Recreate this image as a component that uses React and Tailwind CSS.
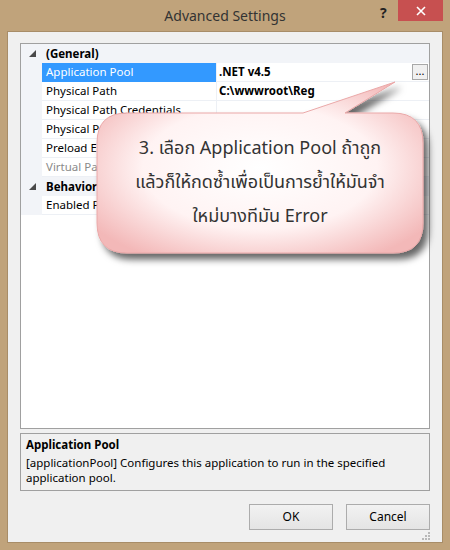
import React from "react";

const ui = { fontFamily: '"Noto Sans", "Open Sans", sans-serif' };

const rows = [
  { type: "cat", name: "(General)" },
  { name: "Application Pool", value: ".NET v4.5", selected: true },
  { name: "Physical Path", value: "C:\\wwwroot\\Reg" },
  { name: "Physical Path Credentials" },
  { name: "Physical Path Logon Type" },
  { name: "Preload Enabled" },
  { name: "Virtual Path", muted: true },
  { type: "cat", name: "Behavior" },
  { name: "Enabled Protocols" },
];

const Expander = () => (
  <svg width="7" height="7" viewBox="0 0 7 7" className="block">
    <path d="M7 0 L7 7 L0 7 Z" fill="#4a4a4a" />
  </svg>
);

const GridRow = ({ row }) => {
  if (row.type === "cat") {
    return (
      <div className="flex h-[19px] items-center bg-[#f2f4f8]">
        <div className="flex w-[21px] shrink-0 justify-center pl-[2px]">
          <Expander />
        </div>
        <span className="pl-[4px] text-[11.5px] font-bold text-black">{row.name}</span>
      </div>
    );
  }
  return (
    <div className="flex h-[19px]">
      <div className="w-[21px] shrink-0 bg-[#f2f4f8]" />
      <div
        className={`flex w-[174px] shrink-0 items-center overflow-hidden whitespace-nowrap border-b pl-[4px] text-[11.5px] ${
          row.selected
            ? "border-[#3399ff] bg-[#3399ff] text-white"
            : "border-[#edf0f5] bg-white " + (row.muted ? "text-[#8a8a8a]" : "text-black")
        }`}
      >
        {row.name}
      </div>
      <div className="flex flex-1 items-center justify-between border-b border-l border-[#edf0f5] bg-white pl-[2px] pr-[1px]">
        <span className="text-[11.5px] font-bold text-black">{row.value}</span>
        {row.selected && (
          <span className="flex h-[16px] w-[16px] items-center justify-center border border-[#a8a8a8] bg-[#f0f0f0] pb-[4px] text-[11px] leading-none text-black">
            ...
          </span>
        )}
      </div>
    </div>
  );
};

const Callout = () => (
  <>
    <svg className="pointer-events-none absolute left-0 top-0" width="450" height="550" viewBox="0 0 450 550">
      <defs>
        <radialGradient id="bubbleFill" cx="50%" cy="50%" r="62%">
          <stop offset="0%" stopColor="#ffffff" />
          <stop offset="58%" stopColor="#fff3f3" />
          <stop offset="100%" stopColor="#f3b8b8" />
        </radialGradient>
        <filter id="bubbleShadow" x="-10%" y="-20%" width="130%" height="150%">
          <feDropShadow dx="5" dy="6" stdDeviation="3.5" floodColor="#000" floodOpacity="0.6" />
        </filter>
      </defs>
      <path
        d="M127 113 L303 113 L395 82 L345 113 L393 113 Q423 113 423 143 L423 223 Q423 253 393 253 L127 253 Q97 253 97 223 L97 143 Q97 113 127 113 Z"
        fill="url(#bubbleFill)"
        stroke="#eaa8a8"
        strokeWidth="1"
        filter="url(#bubbleShadow)"
      />
    </svg>
    <div
      className="absolute left-[97px] top-[113px] flex h-[140px] w-[326px] flex-col items-center pt-[17px] text-[18px] leading-[34px] text-[#333]"
      style={{ fontFamily: '"Noto Sans", "Noto Sans Thai", "Open Sans", sans-serif' }}
    >
      <span>3. เลือก Application Pool ถ้าถูก</span>
      <span>แล้วก็ให้กดซ้ำเพื่อเป็นการย้ำให้มันจำ</span>
      <span>ใหม่บางทีมัน Error</span>
    </div>
  </>
);

export default function App() {
  return (
    <div className="relative flex h-[550px] w-[450px] flex-col bg-[#c0a37b]" style={ui}>
      {/* title bar */}
      <div className="relative flex h-[31px] shrink-0 items-center justify-center">
        <span className="text-[14px] text-[#333]">Advanced Settings</span>
        <span className="absolute left-[380px] top-[2px] text-[14px] font-bold text-[#222]">?</span>
        <div className="absolute left-[398px] top-0 flex h-[21px] w-[45px] items-center justify-center bg-[#c75050]">
          <svg width="10" height="10" viewBox="0 0 10 10">
            <path d="M1 1 L9 9 M9 1 L1 9" stroke="#fff" strokeWidth="1.6" />
          </svg>
        </div>
      </div>

      {/* client area */}
      <div className="mx-[7px] flex h-[512px] flex-col border border-[#a88d68] bg-[#f0f0f0] px-[12px] pt-[11px]">
        <div className="h-[386px] border border-[#a0a0a0] bg-white">
          {rows.map((r) => (
            <GridRow key={r.name} row={r} />
          ))}
        </div>

        <div className="mt-[4px] h-[58px] border border-[#a0a0a0] bg-[#f0f0f0] px-[5px] pt-[3px] text-[11.5px] leading-[15px] text-black">
          <div className="font-bold">Application Pool</div>
          <div className="mt-[3px]">
            [applicationPool] Configures this application to run in the specified application pool.
          </div>
        </div>

        <div className="mt-[13px] flex justify-end gap-[13px]">
          <button className="h-[26px] w-[84px] border border-[#acacac] bg-gradient-to-b from-[#f2f2f2] to-[#e4e4e4] text-[12px] text-black">
            OK
          </button>
          <button className="h-[26px] w-[84px] border border-[#acacac] bg-gradient-to-b from-[#f2f2f2] to-[#e4e4e4] text-[12px] text-black">
            Cancel
          </button>
        </div>

        {/* resize grip */}
        <div className="mt-auto flex justify-end pb-[2px]">
          <svg width="8" height="8" viewBox="0 0 8 8">
            <g fill="#b8b8b8">
              <rect x="6" y="0" width="2" height="2" />
              <rect x="3" y="3" width="2" height="2" />
              <rect x="6" y="3" width="2" height="2" />
              <rect x="0" y="6" width="2" height="2" />
              <rect x="3" y="6" width="2" height="2" />
              <rect x="6" y="6" width="2" height="2" />
            </g>
          </svg>
        </div>
      </div>

      <Callout />
    </div>
  );
}
